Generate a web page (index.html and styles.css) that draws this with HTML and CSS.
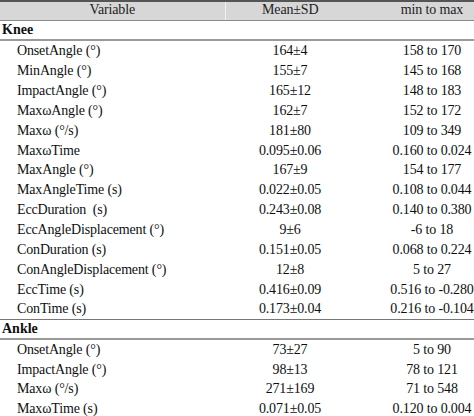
FILE: index.html
```html
<!DOCTYPE html>
<html>
<head>
<meta charset="utf-8">
<link rel="stylesheet" href="styles.css">
</head>
<body>
<table class="stats">
  <colgroup>
    <col class="c-var">
    <col class="c-mean">
    <col class="c-range">
  </colgroup>
  <thead>
    <tr class="head">
      <th>Variable</th>
      <th>Mean±SD</th>
      <th>min to max</th>
    </tr>
  </thead>
  <tbody>
    <tr class="group"><td>Knee</td><td></td><td></td></tr>
    <tr><td>OnsetAngle (°)</td><td>164±4</td><td>158 to 170</td></tr>
    <tr><td>MinAngle (°)</td><td>155±7</td><td>145 to 168</td></tr>
    <tr><td>ImpactAngle (°)</td><td>165±12</td><td>148 to 183</td></tr>
    <tr><td>MaxωAngle (°)</td><td>162±7</td><td>152 to 172</td></tr>
    <tr><td>Maxω (°/s)</td><td>181±80</td><td>109 to 349</td></tr>
    <tr><td>MaxωTime</td><td>0.095±0.06</td><td>0.160 to 0.024</td></tr>
    <tr><td>MaxAngle (°)</td><td>167±9</td><td>154 to 177</td></tr>
    <tr><td>MaxAngleTime (s)</td><td>0.022±0.05</td><td>0.108 to 0.044</td></tr>
    <tr><td>EccDuration&nbsp; (s)</td><td>0.243±0.08</td><td>0.140 to 0.380</td></tr>
    <tr><td>EccAngleDisplacement (°)</td><td>9±6</td><td>-6 to 18</td></tr>
    <tr><td>ConDuration (s)</td><td>0.151±0.05</td><td>0.068 to 0.224</td></tr>
    <tr><td>ConAngleDisplacement (°)</td><td>12±8</td><td>5 to 27</td></tr>
    <tr><td>EccTime (s)</td><td>0.416±0.09</td><td>0.516 to -0.280</td></tr>
    <tr class="last"><td>ConTime (s)</td><td>0.173±0.04</td><td>0.216 to -0.104</td></tr>
    <tr class="group"><td>Ankle</td><td></td><td></td></tr>
    <tr class="ankle"><td>OnsetAngle (°)</td><td>73±27</td><td>5 to 90</td></tr>
    <tr class="ankle"><td>ImpactAngle (°)</td><td>98±13</td><td>78 to 121</td></tr>
    <tr class="ankle"><td>Maxω (°/s)</td><td>271±169</td><td>71 to 548</td></tr>
    <tr class="ankle"><td>MaxωTime (s)</td><td>0.071±0.05</td><td>0.120 to 0.004</td></tr>
  </tbody>
</table>
</body>
</html>
```

FILE: styles.css
```css
html, body {
  margin: 0;
  padding: 0;
  background: #ffffff;
  overflow: hidden;
}

body {
  width: 474px;
  height: 416px;
}

.stats {
  width: 509px;
  table-layout: fixed;
  border-collapse: collapse;
  font-family: "Liberation Serif", "Times New Roman", serif;
  font-size: 14px;
  letter-spacing: -0.15px;
  color: #0f0f0f;
  line-height: 19px;
}

.c-var { width: 225px; }
.c-mean { width: 130px; }
.c-range { width: 154px; }

.stats th,
.stats td {
  padding: 0;
  height: 19.85px;
  white-space: nowrap;
  text-align: center;
  font-weight: normal;
}

.head th {
  background: #d7d7d7;
  color: #222222;
  height: 16px;
  padding-bottom: 2px;
  border-top: 2px solid #555555;
  border-bottom: 1px solid #8a8a8a;
  line-height: 16px;
}

.head th:first-child {
  border-right: 1px solid #f2f2f2;
}

.stats td:first-child {
  text-align: left;
  padding-left: 17px;
}

.group td {
  font-weight: bold;
  border-bottom: 2px solid #9a9a9a;
  height: 18px;
  line-height: 18px;
  letter-spacing: 0;
}

.group td:first-child {
  padding-left: 2px;
}

.last td {
  border-bottom: 1px solid #777777;
}

.ankle td {
  height: 19.5px;
}
```
